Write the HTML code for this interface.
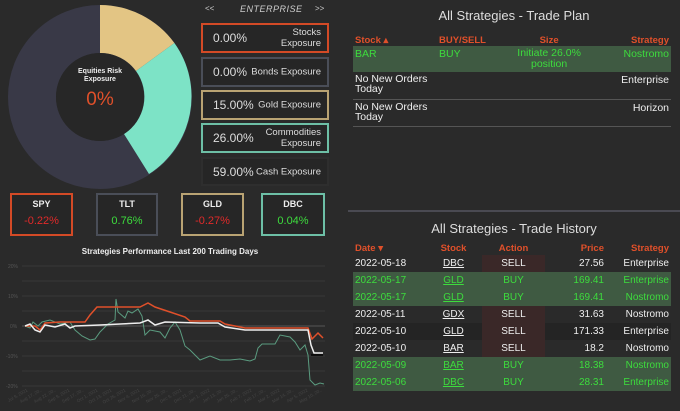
<!DOCTYPE html>
<html><head><style>
body{margin:0;width:680px;height:411px;background:#2a2a2a;font-family:"Liberation Sans",sans-serif;color:#eee;position:relative;overflow:hidden}
.a{position:absolute}
.box{position:absolute;left:201px;width:128px;border:2px solid;background:#262626;box-sizing:border-box;font-size:11px;color:#ddd}
.box .p{position:absolute;left:10px;top:50%;transform:translateY(-50%);font-size:12px}
.box .l{position:absolute;right:6px;top:50%;transform:translateY(-50%);text-align:right;font-size:9.5px;line-height:11px}
.t{position:absolute;top:193px;height:43px;border:2px solid;box-sizing:border-box;background:#262626;text-align:center}
.t b{display:block;font-size:9px;margin-top:4px;color:#eee}
.t span{display:block;font-size:11px;margin-top:6px}
table{border-collapse:collapse;position:absolute;left:353px;width:318px;font-size:10.5px}
th{color:#e0502a;font-size:9.5px;font-weight:bold;padding:0 2px;text-align:left}
td{padding:0 2px}
.g td{background:#3f5a42;color:#3ddc3d}
.r{text-align:right}.c{text-align:center}
u{text-decoration:underline}
</style></head><body>
<svg class="a" style="left:0;top:0" width="200" height="190">
<circle cx="100" cy="97" r="68" fill="none" stroke="#393947" stroke-width="48"/>
<path d="M100 5 A92 92 0 0 1 174.4 43 L136 71 A44 44 0 0 0 100 53 Z" fill="#e3c584"/>
<path d="M174.4 43 A92 92 0 0 1 149 174 L124 134 A44 44 0 0 0 136 71 Z" fill="#7de3c6"/>
<circle cx="100" cy="97" r="44" fill="#272727"/>
<text x="100" y="73" fill="#eee" font-size="7" font-weight="bold" text-anchor="middle">Equities Risk</text>
<text x="100" y="81" fill="#eee" font-size="7" font-weight="bold" text-anchor="middle">Exposure</text>
<text x="100" y="105" fill="#e0502a" font-size="19" text-anchor="middle">0%</text>
</svg>
<div class="a" style="left:205px;top:4px;font-size:8px;color:#ccc">&lt;&lt;</div>
<div class="a" style="left:240px;top:4px;font-size:9px;color:#ccc;font-style:italic;letter-spacing:.5px">ENTERPRISE</div>
<div class="a" style="left:315px;top:4px;font-size:8px;color:#ccc">&gt;&gt;</div>
<div class="box" style="top:23px;height:30px;border-color:#d34a26"><div class="p">0.00%</div><div class="l">Stocks<br>Exposure</div></div>
<div class="box" style="top:57px;height:30px;border-color:#4a4e58"><div class="p">0.00%</div><div class="l">Bonds Exposure</div></div>
<div class="box" style="top:90px;height:30px;border-color:#b9a373"><div class="p">15.00%</div><div class="l">Gold Exposure</div></div>
<div class="box" style="top:123px;height:30px;border-color:#6dbfa6"><div class="p">26.00%</div><div class="l">Commodities<br>Exposure</div></div>
<div class="box" style="top:157px;height:29px;border-color:#2e2e2e"><div class="p">59.00%</div><div class="l">Cash Exposure</div></div>
<div class="t" style="left:10px;width:63px;border-color:#d34a26"><b>SPY</b><span style="color:#e02a2a">-0.22%</span></div>
<div class="t" style="left:96px;width:62px;border-color:#4a4e58"><b>TLT</b><span style="color:#3ddc3d">0.76%</span></div>
<div class="t" style="left:181px;width:63px;border-color:#b9a373"><b>GLD</b><span style="color:#e02a2a">-0.27%</span></div>
<div class="t" style="left:261px;width:64px;border-color:#6dbfa6"><b>DBC</b><span style="color:#3ddc3d">0.04%</span></div>
<div class="a" style="left:0;width:340px;top:247px;text-align:center;font-size:8px;font-weight:bold">Strategies Performance Last 200 Trading Days</div>
<svg class="a" style="left:0;top:260px" width="340" height="151">
<g stroke="#383838" stroke-width="1">
<line x1="22" y1="6" x2="325" y2="6"/><line x1="22" y1="21" x2="325" y2="21"/><line x1="22" y1="36" x2="325" y2="36"/><line x1="22" y1="51" x2="325" y2="51"/><line x1="22" y1="81" x2="325" y2="81"/><line x1="22" y1="96" x2="325" y2="96"/><line x1="22" y1="111" x2="325" y2="111"/><line x1="22" y1="126" x2="325" y2="126"/>
<line x1="22" y1="66" x2="325" y2="66" stroke="#555"/></g>
<g fill="#555" font-size="5"><text x="8" y="8">20%</text><text x="8" y="38">10%</text><text x="10" y="68">0%</text><text x="6" y="98">-10%</text><text x="6" y="128">-20%</text></g>
<g fill="#454545" font-size="4.5" text-anchor="end">
<text transform="translate(28,131) rotate(-30)">Jul 9, 2021</text>
<text transform="translate(42,131) rotate(-30)">Aug 17, 20..</text>
<text transform="translate(56,131) rotate(-30)">Aug 22, 20..</text>
<text transform="translate(70,131) rotate(-30)">Sep 9, 2021</text>
<text transform="translate(84,131) rotate(-30)">Sep 17, 20..</text>
<text transform="translate(98,131) rotate(-30)">Oct 1, 2021</text>
<text transform="translate(112,131) rotate(-30)">Oct 13, 2021</text>
<text transform="translate(126,131) rotate(-30)">Oct 26, 2021</text>
<text transform="translate(140,131) rotate(-30)">Nov 4, 2021</text>
<text transform="translate(154,131) rotate(-30)">Nov 16, 20..</text>
<text transform="translate(168,131) rotate(-30)">Nov 26, 20..</text>
<text transform="translate(182,131) rotate(-30)">Dec 9, 2021</text>
<text transform="translate(196,131) rotate(-30)">Dec 21, 20..</text>
<text transform="translate(210,131) rotate(-30)">Jan 1, 2022</text>
<text transform="translate(224,131) rotate(-30)">Jan 13, 20..</text>
<text transform="translate(238,131) rotate(-30)">Jan 26, 20..</text>
<text transform="translate(252,131) rotate(-30)">Feb 7, 2022</text>
<text transform="translate(266,131) rotate(-30)">Feb 17, 20..</text>
<text transform="translate(280,131) rotate(-30)">Mar 2, 2022</text>
<text transform="translate(294,131) rotate(-30)">Mar 14, 20..</text>
<text transform="translate(308,131) rotate(-30)">Apr 5, 2022</text>
<text transform="translate(322,131) rotate(-30)">May 10, 20..</text>
</g>
<polyline fill="none" stroke="#5b9c80" stroke-width="1" points="25,66 30,68 33,62 38,66 42,62 50,60 60,64 70,62 75,70 82,76 90,80 95,79 100,72 108,64 115,60 116,39 118,52 125,58 128,51 132,53 138,49 142,56 145,75 150,70 160,72 165,78 170,68 175,62 180,70 185,86 190,90 200,100 210,96 220,100 230,100 240,99 250,101 255,99 258,88 262,84 275,84 280,75 290,77 295,82 300,90 305,85 308,95 310,120 315,125 320,123 324,124"/>
<polyline fill="none" stroke="#e0502a" stroke-width="1.5" points="25,66 35,66 40,70 45,63 60,62 85,62 90,55 97,47 140,47 148,43 155,47 170,52 185,57 190,61 220,61 225,64 245,68 308,68 312,79 318,73 323,78"/>
<polyline fill="none" stroke="#eee" stroke-width="1.5" points="25,66 30,64 35,70 40,72 45,65 55,67 65,64 70,68 75,66 100,65 140,63 148,60 155,65 165,62 200,63 218,63 225,67 245,70 308,70 311,85 314,93 323,93"/>
<line x1="311" y1="95" x2="323" y2="95" stroke="#000" stroke-width="1.5"/>
</svg>
<div class="a" style="left:348px;top:8px;width:332px;text-align:center;font-size:13px;color:#ddd">All Strategies - Trade Plan</div>
<table style="top:34px">
<tr style="height:12px"><th style="width:80px">Stock ▴</th><th style="width:60px">BUY/SELL</th><th class="c">Size</th><th class="r">Strategy</th></tr>
<tr class="g" style="height:26px;vertical-align:top"><td style="padding-top:2px">BAR</td><td style="padding-top:2px">BUY</td><td class="c" style="padding-top:2px;line-height:11px">Initiate 26.0%<br>position</td><td class="r" style="padding-top:2px">Nostromo</td></tr>
<tr style="height:27px;vertical-align:top;border-bottom:1px solid #555"><td colspan="2" style="padding-top:2px;line-height:10px">No New Orders<br>Today</td><td></td><td class="r" style="padding-top:2px">Enterprise</td></tr>
<tr style="height:27px;vertical-align:top;border-bottom:1px solid #555"><td colspan="2" style="padding-top:2px;line-height:10px">No New Orders<br>Today</td><td></td><td class="r" style="padding-top:2px">Horizon</td></tr>
</table>
<div class="a" style="left:348px;top:210px;width:332px;height:2px;background:#4a4a52"></div>
<div class="a" style="left:348px;top:221px;width:332px;text-align:center;font-size:13px;color:#ddd">All Strategies - Trade History</div>
<table style="top:242px;font-size:10px">
<tr style="height:13px"><th style="width:68px">Date ▾</th><th class="c" style="width:53px">Stock</th><th class="c" style="width:59px">Action</th><th class="r" style="width:57px">Price</th><th class="r">Strategy</th></tr>
<tr style="height:17px"><td>2022-05-18</td><td class="c"><u>DBC</u></td><td class="c" style="background:#3a2828">SELL</td><td class="r">27.56</td><td class="r">Enterprise</td></tr>
<tr class="g" style="height:17px"><td>2022-05-17</td><td class="c"><u>GLD</u></td><td class="c">BUY</td><td class="r">169.41</td><td class="r">Enterprise</td></tr>
<tr class="g" style="height:17px"><td>2022-05-17</td><td class="c"><u>GLD</u></td><td class="c">BUY</td><td class="r">169.41</td><td class="r">Nostromo</td></tr>
<tr style="height:17px"><td>2022-05-11</td><td class="c"><u>GDX</u></td><td class="c" style="background:#3a2828">SELL</td><td class="r">31.63</td><td class="r">Nostromo</td></tr>
<tr style="height:17px;background:#242424"><td>2022-05-10</td><td class="c"><u>GLD</u></td><td class="c" style="background:#3a2828">SELL</td><td class="r">171.33</td><td class="r">Enterprise</td></tr>
<tr style="height:17px"><td>2022-05-10</td><td class="c"><u>BAR</u></td><td class="c" style="background:#3a2828">SELL</td><td class="r">18.2</td><td class="r">Nostromo</td></tr>
<tr class="g" style="height:17px"><td>2022-05-09</td><td class="c"><u>BAR</u></td><td class="c">BUY</td><td class="r">18.38</td><td class="r">Nostromo</td></tr>
<tr class="g" style="height:17px"><td>2022-05-06</td><td class="c"><u>DBC</u></td><td class="c">BUY</td><td class="r">28.31</td><td class="r">Enterprise</td></tr>
</table>
</body></html>
